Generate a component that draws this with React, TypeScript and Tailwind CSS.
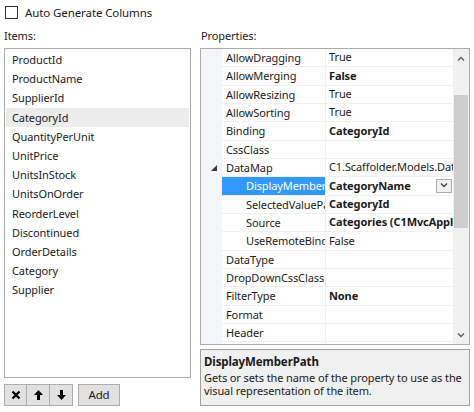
import React from 'react';

const items = [
  'ProductId',
  'ProductName',
  'SupplierId',
  'CategoryId',
  'QuantityPerUnit',
  'UnitPrice',
  'UnitsInStock',
  'UnitsOnOrder',
  'ReorderLevel',
  'Discontinued',
  'OrderDetails',
  'Category',
  'Supplier',
];

type Prop = {
  name: string;
  value?: string;
  bold?: boolean;
  child?: boolean;
  expanded?: boolean;
  selected?: boolean;
};

const props: Prop[] = [
  { name: 'AllowDragging', value: 'True' },
  { name: 'AllowMerging', value: 'False', bold: true },
  { name: 'AllowResizing', value: 'True' },
  { name: 'AllowSorting', value: 'True' },
  { name: 'Binding', value: 'CategoryId', bold: true },
  { name: 'CssClass' },
  { name: 'DataMap', value: 'C1.Scaffolder.Models.DataMap', expanded: true },
  { name: 'DisplayMemberPath', value: 'CategoryName', bold: true, child: true, selected: true },
  { name: 'SelectedValuePath', value: 'CategoryId', bold: true, child: true },
  { name: 'Source', value: 'Categories (C1MvcApplication.Models)', bold: true, child: true },
  { name: 'UseRemoteBinding', value: 'False', child: true },
  { name: 'DataType' },
  { name: 'DropDownCssClass' },
  { name: 'FilterType', value: 'None', bold: true },
  { name: 'Format' },
  { name: 'Header' },
  { name: 'IsContentHtml', value: 'False' },
];

function PropRow({ p }: { p: Prop }) {
  return (
    <div className="flex h-[18.33px] shrink-0">
      {/* gutter */}
      <div className="w-[21px] shrink-0 bg-[#f3f5f9] flex items-center justify-center pl-[5px]">
        {p.expanded && (
          <svg width="6" height="6" viewBox="0 0 6 6">
            <path d="M6 0 L6 6 L0 6 Z" fill="#3c3c3c" />
          </svg>
        )}
      </div>
      <div
        className={`w-[104px] shrink-0 overflow-hidden whitespace-nowrap leading-[18px] border-b border-r border-[#f0f0f0] ${
          p.child ? 'pl-[24px]' : 'pl-[4px]'
        } ${p.selected ? 'bg-[#3399ff] text-white' : ''}`}
      >
        {p.name}
      </div>
      <div
        className={`flex-1 min-w-0 flex items-center overflow-hidden whitespace-nowrap border-b border-[#f0f0f0] pl-[3px] ${
          p.bold ? 'font-bold' : ''
        }`}
      >
        <span className="flex-1 overflow-hidden">{p.value}</span>
        {p.selected && (
          <span className="w-[16px] h-[14px] mr-[1px] shrink-0 border border-[#acacac] bg-[#f0f0f0] flex items-center justify-center">
            <svg width="8" height="5" viewBox="0 0 8 5">
              <path d="M1 0.5 L4 3.5 L7 0.5" fill="none" stroke="#404040" strokeWidth="1.3" />
            </svg>
          </span>
        )}
      </div>
    </div>
  );
}

function Chevron({ up }: { up?: boolean }) {
  return (
    <svg width="8" height="5" viewBox="0 0 8 5">
      <path
        d={up ? 'M1 4.5 L4 1.5 L7 4.5' : 'M1 0.5 L4 3.5 L7 0.5'}
        fill="none"
        stroke="#606060"
        strokeWidth="1.4"
      />
    </svg>
  );
}

export default function App() {
  return (
    <div
      className="w-[474px] h-[412px] bg-white text-[#1b1b1b] text-[11px] tracking-[-0.1px] overflow-hidden"
      style={{ fontFamily: '"Segoe UI", "Noto Sans", "Open Sans", sans-serif' }}
    >
      {/* top checkbox */}
      <div className="flex items-center h-[24px] pl-[5px] pt-[1px]">
        <span className="w-[13px] h-[13px] border border-[#333] bg-white" />
        <span className="ml-[7px] text-[11.5px]">Auto Generate Columns</span>
      </div>

      <div className="flex pt-[4px]">
        {/* Items */}
        <div className="ml-[4px] w-[187px] flex flex-col">
          <div className="h-[20px] leading-[16px]">Items:</div>
          <div className="h-[330px] border border-[#acacac] pt-[1px] px-[1px]">
            {items.map((it) => (
              <div
                key={it}
                className={`h-[19.2px] leading-[19px] pl-[6px] ${it === 'CategoryId' ? 'bg-[#ececec]' : ''}`}
              >
                {it}
              </div>
            ))}
          </div>
          <div className="flex mt-[6px]">
            <button className="w-[23px] h-[22px] border border-[#adadad] bg-[#e1e1e1] flex items-center justify-center">
              <svg width="10" height="10" viewBox="0 0 10 10">
                <path d="M1.5 1.5 L8.5 8.5 M8.5 1.5 L1.5 8.5" stroke="#000" strokeWidth="2.2" />
              </svg>
            </button>
            <button className="w-[23px] h-[22px] border border-l-0 border-[#adadad] bg-[#e1e1e1] flex items-center justify-center">
              <svg width="9" height="10" viewBox="0 0 9 10">
                <path d="M4.5 0 L9 5 L6 5 L6 10 L3 10 L3 5 L0 5 Z" fill="#000" />
              </svg>
            </button>
            <button className="w-[23px] h-[22px] border border-l-0 border-[#adadad] bg-[#e1e1e1] flex items-center justify-center">
              <svg width="9" height="10" viewBox="0 0 9 10">
                <path d="M4.5 10 L9 5 L6 5 L6 0 L3 0 L3 5 L0 5 Z" fill="#000" />
              </svg>
            </button>
            <button className="ml-[5px] w-[42px] h-[22px] border border-[#adadad] bg-[#e1e1e1] text-[11.5px] flex items-center justify-center">
              Add
            </button>
          </div>
        </div>

        {/* Properties */}
        <div className="ml-[9px] w-[270px] flex flex-col">
          <div className="h-[20px] leading-[16px] pl-[1px]">Properties:</div>
          <div className="h-[297px] border border-[#acacac] flex overflow-hidden">
            <div className="flex-1 min-w-0 flex flex-col overflow-hidden">
              {props.map((p) => (
                <PropRow key={p.name} p={p} />
              ))}
            </div>
            {/* scrollbar */}
            <div className="w-[16px] shrink-0 bg-[#f0f0f0] flex flex-col">
              <div className="h-[18px] flex items-center justify-center">
                <Chevron up />
              </div>
              <div className="h-[28px]" />
              <div className="h-[133px] mx-[1px] bg-[#cdcdcd]" />
              <div className="flex-1" />
              <div className="h-[18px] flex items-center justify-center">
                <Chevron />
              </div>
            </div>
          </div>
          <div className="mt-[4px] h-[57px] border border-[#a0a0a0] bg-[#f0f0f0] px-[3px] pt-[4px] leading-[13px] whitespace-nowrap overflow-hidden">
            <div className="font-bold text-[11.5px] leading-[16px]">DisplayMemberPath</div>
            <div className="mt-[1px]">Gets or sets the name of the property to use as the</div>
            <div>visual representation of the item.</div>
          </div>
        </div>
      </div>
    </div>
  );
}
